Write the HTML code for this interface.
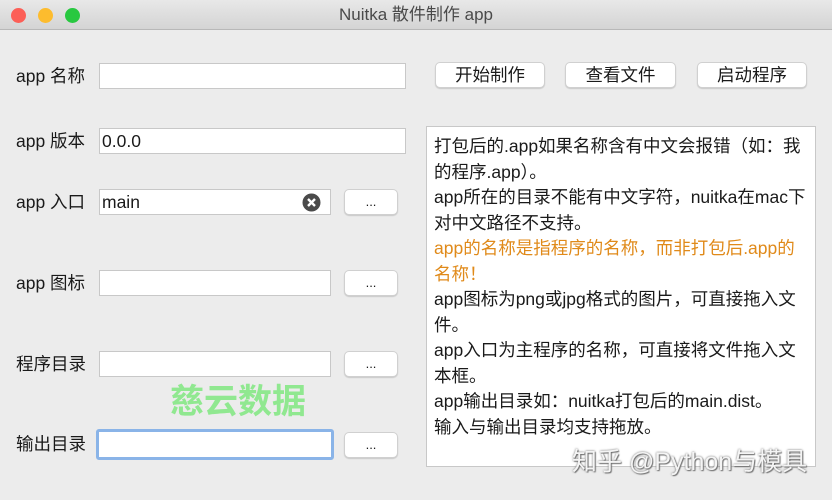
<!DOCTYPE html>
<html><head><meta charset="utf-8"><style>
*{margin:0;padding:0;box-sizing:border-box}
body{width:832px;height:500px;background:#ececec;font-family:"Liberation Sans","Noto Sans CJK SC",sans-serif;position:relative;overflow:hidden;color:#1a1a1a}
.tb{position:absolute;left:0;top:0;width:832px;height:30px;background:linear-gradient(#e8e8e8,#d4d4d4);border-bottom:1px solid #b8b8b8;text-align:center;font-size:17px;line-height:30px;color:#4a4a4a}
.dot{position:absolute;top:8px;width:15px;height:15px;border-radius:50%}
.lbl{position:absolute;left:16px;font-size:17.5px;line-height:24px}
.in{position:absolute;background:#fff;border:1px solid #c8c8c8;height:26px;font-size:17.5px;line-height:24px;padding-left:2px}
.bt{position:absolute;background:#fff;border:1px solid #d0d0d0;border-radius:5px;height:26px;font-size:17.5px;text-align:center;line-height:24px;box-shadow:0 1px 1px rgba(0,0,0,.15)}
.dots{width:54px;font-size:13px}
.txt{position:absolute;left:426px;top:126px;width:390px;height:341px;background:#fff;border:1px solid #c8c8c8;padding:7px 0 0 7px;font-size:17.5px;line-height:25.5px;white-space:nowrap}
.or{color:#e08a1a}
</style></head><body>
<div class="tb">Nuitka 散件制作 app</div>
<div class="dot" style="left:11px;background:#fc5f57"></div>
<div class="dot" style="left:38px;background:#fdbc2e"></div>
<div class="dot" style="left:65px;background:#28c840"></div>

<div class="lbl" style="top:64px">app 名称</div>
<div class="in" style="left:99px;top:63px;width:307px"></div>
<div class="lbl" style="top:129px">app 版本</div>
<div class="in" style="left:99px;top:128px;width:307px">0.0.0</div>
<div class="lbl" style="top:190px">app 入口</div>
<div class="in" style="left:99px;top:189px;width:232px">main
<svg style="position:absolute;left:202px;top:3px" width="19" height="19" viewBox="0 0 19 19"><circle cx="9.5" cy="9.5" r="9" fill="#4a4a4a"/><path d="M6 6L13 13M13 6L6 13" stroke="#fff" stroke-width="2.4"/></svg></div>
<div class="bt dots" style="left:344px;top:189px">...</div>
<div class="lbl" style="top:271px">app 图标</div>
<div class="in" style="left:99px;top:270px;width:232px"></div>
<div class="bt dots" style="left:344px;top:270px">...</div>
<div class="lbl" style="top:352px">程序目录</div>
<div class="in" style="left:99px;top:351px;width:232px"></div>
<div class="bt dots" style="left:344px;top:351px">...</div>
<div class="lbl" style="top:432px">输出目录</div>
<div class="in" style="left:96px;top:429px;width:238px;height:31px;border:3px solid #8ab4e8;border-radius:3px"></div>
<div class="bt dots" style="left:344px;top:432px">...</div>

<div class="bt" style="left:435px;top:62px;width:110px">开始制作</div>
<div class="bt" style="left:565px;top:62px;width:111px">查看文件</div>
<div class="bt" style="left:697px;top:62px;width:110px">启动程序</div>

<div class="txt">打包后的.app如果名称含有中文会报错（如：我<br>的程序.app）。<br>app所在的目录不能有中文字符，nuitka在mac下<br>对中文路径不支持。<br><span class="or">app的名称是指程序的名称，而非打包后.app的<br>名称！</span><br>app图标为png或jpg格式的图片，可直接拖入文<br>件。<br>app入口为主程序的名称，可直接将文件拖入文<br>本框。<br>app输出目录如：nuitka打包后的main.dist。<br>输入与输出目录均支持拖放。</div>

<div style="position:absolute;left:170px;top:381px;font-size:34px;line-height:42px;font-weight:bold;color:#90e890">慈云数据</div>
<div style="position:absolute;left:572px;top:446px;font-size:25px;line-height:32px;color:#f4f4f4;text-shadow:0 0 2px #666,1px 1px 1px #777">知乎 @Python与模具</div>
</body></html>
